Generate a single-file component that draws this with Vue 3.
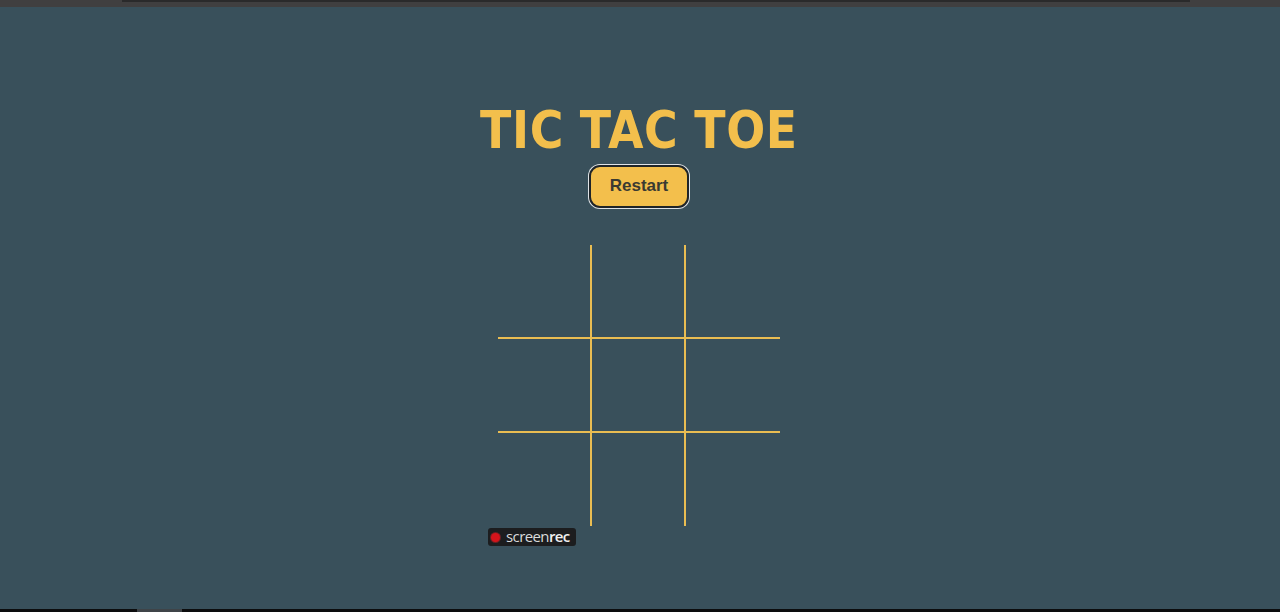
<script setup>
const cells = Array.from({ length: 9 }, (_, i) => i)
</script>

<template>
  <div class="page">
    <div class="topbar"><div class="topline"></div></div>
    <main class="game">
      <h1 class="title">TIC TAC TOE</h1>
      <button class="restart" type="button">Restart</button>
      <div class="board">
        <div v-for="c in cells" :key="c" class="cell"></div>
        <div class="badge">
          <span class="rec"></span>
          <span class="brand">screen<b>rec</b></span>
        </div>
      </div>
    </main>
    <div class="bottombar"><div class="tab"></div></div>
  </div>
</template>

<style scoped>
.page {
  width: 1280px;
  height: 612px;
  display: flex;
  flex-direction: column;
  background: #39505b;
  overflow: hidden;
}
.topbar {
  height: 7px;
  flex: none;
  background: #403f40;
  padding: 0 90px 0 122px;
}
.topline {
  height: 2px;
  background: #2a2a2b;
}
.game {
  flex: 1;
  display: flex;
  flex-direction: column;
  align-items: center;
  padding: 94px 2px 0 0;
}
.title {
  margin: 0;
  height: 64px;
  line-height: 60px;
  font-family: "DejaVu Sans", sans-serif;
  font-stretch: condensed;
  font-weight: 700;
  font-size: 51px;
  letter-spacing: 0.7px;
  word-spacing: -1px;
  white-space: nowrap;
  color: #f3bf4c;
}
.restart {
  width: 100px;
  height: 43px;
  box-sizing: border-box;
  background: #f3bf4c;
  border: 2px solid #1f2428;
  border-radius: 11px;
  box-shadow: 0 0 0 1px #dfe3e6;
  font-family: "Liberation Sans", sans-serif;
  font-weight: 700;
  font-size: 17px;
  color: #3a3a32;
  padding: 0 0 2px;
}
.board {
  position: relative;
  margin-top: 37px;
  width: 282px;
  display: grid;
  grid-template-columns: repeat(3, 94px);
  grid-template-rows: 94px 94px 93px;
}
.cell {
  box-sizing: border-box;
  border-right: 2px solid #eabd52;
  border-bottom: 2px solid #eabd52;
}
.cell:nth-child(3n) {
  border-right: 0;
}
.cell:nth-child(n + 7) {
  border-bottom: 0;
}
.badge {
  position: absolute;
  left: -10px;
  top: 283px;
  width: 88px;
  height: 18px;
  box-sizing: border-box;
  padding-left: 3px;
  display: flex;
  align-items: center;
  gap: 6px;
  background: #1c1d1f;
  border-radius: 3px;
}
.rec {
  width: 9px;
  height: 9px;
  border-radius: 50%;
  background: #d4141b;
  box-shadow: 0 0 0 1px #6b2024;
}
.brand {
  font-family: "Open Sans", sans-serif;
  font-size: 15px;
  font-weight: 500;
  letter-spacing: -0.6px;
  color: #d9dadb;
  line-height: 16px;
  margin-bottom: 2px;
}
.brand b {
  font-weight: 600;
  color: #f0f0f0;
}
.bottombar {
  height: 3px;
  flex: none;
  background: #0c0d0e;
  padding-left: 137px;
}
.tab {
  width: 45px;
  height: 3px;
  background: #3f4448;
}
</style>

<style>
html, body { margin: 0; background: #39505b; }
</style>
